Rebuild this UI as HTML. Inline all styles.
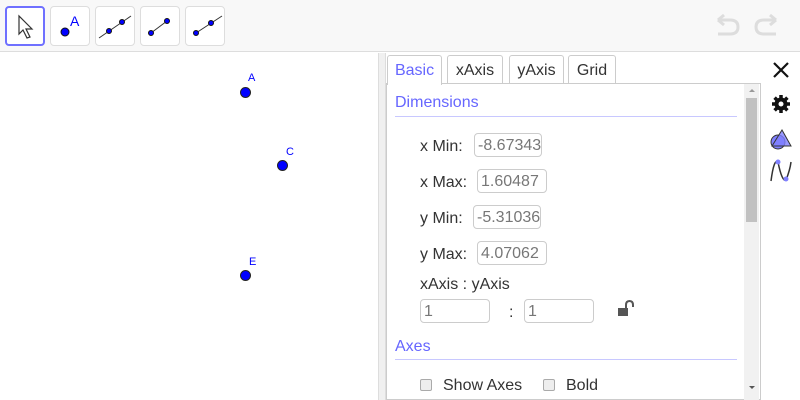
<!DOCTYPE html>
<html><head><style>
*{box-sizing:border-box;margin:0;padding:0}
body{width:800px;height:400px;overflow:hidden;background:#fff;font-family:"Liberation Sans",sans-serif;position:relative}
.a{position:absolute}
.tb{left:0;top:0;width:800px;height:52px;background:#f8f8f8;border-bottom:1px solid #ddd}
.btn{top:6px;width:40px;height:40px;border:1px solid #ddd;border-radius:4px;background:#fff}
.lbl{font-size:16px;color:#333}
.inp{height:24px;border:1px solid #ccc;border-radius:4px;font-size:16px;color:#777;padding:3px 0 0 3px;background:#fff}
.tab{top:55px;height:29px;border:1px solid #ccc;border-bottom:none;border-radius:3px 3px 0 0;font-size:16px;padding-top:6px;text-align:center;color:#333;background:#fff}
.hd{font-size:16px;color:#6666ff}
.pt{width:11px;height:11px;border-radius:50%;background:#0000ff;border:1px solid #222}
.pl{font-size:11px;color:#0000ff}
.cb{width:12px;height:12px;border:1px solid #aaa;border-radius:2px;background:#eee}
</style></head><body>
<div class="a tb"></div>
<div class="a btn" style="left:5px;border:2px solid #6f70ff"><svg width="36" height="36"><path d="M12 8 L12 26 L16 22 L20 30 L23 29 L19 21 L25 21 Z" fill="#fff" stroke="#333" stroke-width="1.2"/></svg></div>
<div class="a btn" style="left:50px"><svg width="38" height="38"><circle cx="14" cy="25" r="4" fill="#0000ff" stroke="#111"/><text x="19" y="19" font-size="14" fill="#0000ff" font-family="Liberation Sans">A</text></svg></div>
<div class="a btn" style="left:95px"><svg width="38" height="38"><line x1="3" y1="31" x2="35" y2="9" stroke="#333"/><circle cx="13" cy="24" r="2.5" fill="#0000ff" stroke="#111"/><circle cx="26" cy="15" r="2.5" fill="#0000ff" stroke="#111"/></svg></div>
<div class="a btn" style="left:140px"><svg width="38" height="38"><line x1="10" y1="26" x2="26" y2="14" stroke="#333"/><circle cx="10" cy="26" r="2.5" fill="#0000ff" stroke="#111"/><circle cx="26" cy="14" r="2.5" fill="#0000ff" stroke="#111"/></svg></div>
<div class="a btn" style="left:185px"><svg width="38" height="38"><line x1="10" y1="26" x2="36" y2="9" stroke="#333"/><circle cx="10" cy="26" r="2.5" fill="#0000ff" stroke="#111"/><circle cx="25" cy="16" r="2.5" fill="#0000ff" stroke="#111"/></svg></div>
<svg class="a" style="left:712px;top:12px" width="70" height="28"><path d="M6 8 H18 Q26 8 26 15 Q26 22 18 22 H6 M6 8 L12 3 M6 8 L12 13" fill="none" stroke="#ddd" stroke-width="3"/><path d="M64 8 H52 Q44 8 44 15 Q44 22 52 22 H64 M64 8 L58 3 M64 8 L58 13" fill="none" stroke="#ddd" stroke-width="3"/></svg>

<div class="a pt" style="left:240px;top:87px"></div><div class="a pl" style="left:248px;top:72px">A</div>
<div class="a pt" style="left:277px;top:160px"></div><div class="a pl" style="left:286px;top:146px">C</div>
<div class="a pt" style="left:240px;top:270px"></div><div class="a pl" style="left:249px;top:256px">E</div>

<div class="a" style="left:378px;top:53px;width:8px;height:347px;background:#f0f0f0;border-left:1px solid #ddd;border-right:1px solid #ddd"></div>
<div class="a" style="left:762px;top:53px;width:38px;height:347px;background:#fff"></div>

<div class="a tab" style="left:387px;width:55px;color:#6666ff;height:30px;z-index:2">Basic</div>
<div class="a tab" style="left:447px;width:56px">xAxis</div>
<div class="a tab" style="left:509px;width:55px">yAxis</div>
<div class="a tab" style="left:568px;width:48px">Grid</div>
<div class="a" style="left:386px;top:83px;width:375px;height:317px;border:1px solid #ccc"></div>
<div class="a" style="left:744px;top:84px;width:15px;height:316px;background:#f1f1f1"></div>
<div class="a" style="left:746px;top:98px;width:11px;height:124px;background:#c1c1c1"></div>
<svg class="a" style="left:746px;top:86px" width="12" height="310"><path d="M3 6 L9 6 L6 3Z" fill="#999"/><path d="M3 300 L9 300 L6 303Z" fill="#555"/></svg>

<div class="a hd" style="left:395px;top:94px">Dimensions</div>
<div class="a" style="left:395px;top:116px;width:342px;height:1px;background:#c8c8ff"></div>
<div class="a lbl" style="left:420px;top:138px">x Min:</div><div class="a inp" style="left:474px;top:133px;width:68px">-8.67343</div>
<div class="a lbl" style="left:420px;top:174px">x Max:</div><div class="a inp" style="left:477px;top:169px;width:70px">1.60487</div>
<div class="a lbl" style="left:420px;top:210px">y Min:</div><div class="a inp" style="left:473px;top:205px;width:68px">-5.31036</div>
<div class="a lbl" style="left:420px;top:246px">y Max:</div><div class="a inp" style="left:477px;top:241px;width:70px">4.07062</div>
<div class="a lbl" style="left:420px;top:276px">xAxis : yAxis</div>
<div class="a inp" style="left:420px;top:299px;width:70px">1</div>
<div class="a lbl" style="left:509px;top:304px">:</div>
<div class="a inp" style="left:524px;top:299px;width:70px">1</div>
<svg class="a" style="left:616px;top:300px" width="20" height="18"><rect x="2" y="8" width="10" height="8" fill="#555"/><path d="M10 8 V5 Q10 1 13.5 1 Q17 1 17 5 V7" fill="none" stroke="#555" stroke-width="2"/></svg>
<div class="a hd" style="left:395px;top:338px">Axes</div>
<div class="a" style="left:395px;top:359px;width:342px;height:1px;background:#c8c8ff"></div>
<div class="a cb" style="left:420px;top:379px"></div><div class="a lbl" style="left:443px;top:377px">Show Axes</div>
<div class="a cb" style="left:543px;top:379px"></div><div class="a lbl" style="left:566px;top:377px">Bold</div>

<svg class="a" style="left:766px;top:58px" width="30" height="130"><path d="M8 5 L22 19 M22 5 L8 19" stroke="#111" stroke-width="2.2"/>
<g transform="translate(15,46)"><circle r="6.5" fill="#111"/><g stroke="#111" stroke-width="3.5"><line x1="0" y1="-9" x2="0" y2="9"/><line x1="-9" y1="0" x2="9" y2="0"/><line x1="-6.4" y1="-6.4" x2="6.4" y2="6.4"/><line x1="-6.4" y1="6.4" x2="6.4" y2="-6.4"/></g><circle r="2.5" fill="#fff"/></g>
<circle cx="12" cy="84" r="7" fill="#8080ff" stroke="#333"/><path d="M6 88 L16 72 L25 88Z" fill="#8080ff" fill-opacity=".8" stroke="#333"/>
<path d="M5 123 Q8 100 12 104 Q16 124 20 122 Q24 112 25 104" fill="none" stroke="#333" stroke-width="1.5"/><circle cx="12" cy="104" r="2.5" fill="#8080ff"/><circle cx="20" cy="121" r="2.5" fill="#8080ff"/></svg>
</body></html>
